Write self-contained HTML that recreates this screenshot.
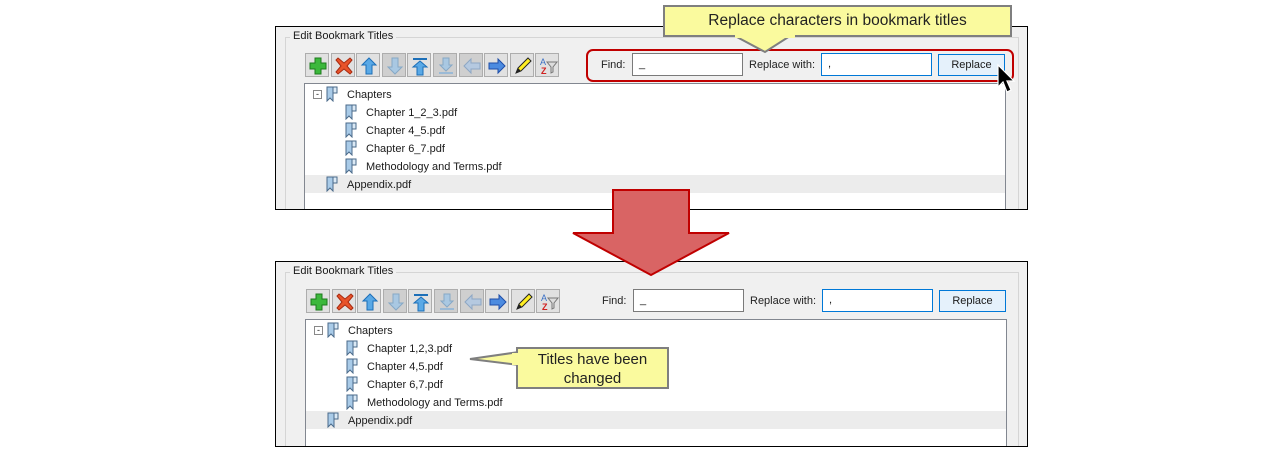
<!DOCTYPE html>
<html><head><style>
*{margin:0;padding:0;box-sizing:border-box}
body{width:1280px;height:454px;background:#fff;position:relative;overflow:hidden;font-family:"Liberation Sans",Arial,sans-serif;font-size:11px;color:#1a1a1a}
.abs{position:absolute}
.panel{position:absolute;left:275px;width:753px;border:1px solid #000;background:#f0f0f0;overflow:hidden}
.grp{position:absolute;left:9px;top:10px;width:734px;height:200px;border:1px solid #d5d5d5}
.grpl{position:absolute;left:14px;top:3px;background:#f0f0f0;padding:0 3px;font-size:11px}
.btn{position:absolute;top:26px;width:24px;height:24px;border:1px solid #adadad;background:#e1e1e1}
.btn.dis{background:#cfcfcf}
.btn svg{position:absolute;left:1px;top:1px}
.tree{position:absolute;left:28px;top:56px;width:702px;height:140px;border:1px solid #828790;background:#fff}
.row{position:absolute;height:18px;font-size:11px;line-height:18px}
.bm{position:absolute;width:12px;height:16px}
.inp{position:absolute;height:23px;border:1px solid #7a7a7a;background:#fff;font-size:11px;padding:4px 6px}
.lbl{position:absolute;font-size:11px;color:#222}
.rbtn{position:absolute;width:67px;height:22px;border:1px solid #0078d7;background:#e5f1fb;text-align:center;line-height:20px;font-size:11px}
.call{position:absolute;background:#fafa9e;border:2px solid #7f7f7f;text-align:center;color:#222}
</style></head><body>

<div class="panel" style="top:26px;height:184px">
 <div class="grp"></div><div class="grpl">Edit Bookmark Titles</div>
 <div class="tree" style="top:56px">
  <div class="abs" style="left:0;top:91px;width:700px;height:18px;background:#ececec"></div>
 </div>
</div>

<div class="panel" style="top:261px;height:186px">
 <div class="grp"></div><div class="grpl">Edit Bookmark Titles</div>
 <div class="tree" style="top:57px;left:29px">
  <div class="abs" style="left:0;top:91px;width:700px;height:18px;background:#ececec"></div>
 </div>
</div>

<div id="dyn"></div>

<div class="abs" style="left:586px;top:49px;width:428px;height:33px;border:2px solid #c00000;border-radius:7px"></div>

<svg class="abs" style="left:660px;top:0" width="360" height="60"><polygon points="75,36 105,52 130,36" fill="#fafa9e" stroke="#7f7f7f" stroke-width="2"/></svg>
<div class="call" style="left:663px;top:5px;width:349px;height:32px;line-height:28px;font-size:15.5px">Replace characters in bookmark titles</div>
<svg class="abs" style="left:735px;top:33px" width="60" height="6"><rect x="0" y="0" width="60" height="5" fill="#fafa9e"/></svg>

<svg class="abs" style="left:996px;top:63px" width="20" height="32"><polygon points="2,2 2,24 7,19 11,29 15,27 11,18 18,18" fill="#000" stroke="#fff" stroke-width="1.2"/></svg>

<svg class="abs" style="left:570px;top:188px" width="164" height="90"><polygon points="43,2 119,2 119,45 159,45 81,87 3,45 43,45" fill="#d96464" stroke="#c00000" stroke-width="2"/></svg>

<svg class="abs" style="left:465px;top:345px" width="60" height="30"><polygon points="5,14 54,7 54,20" fill="#fafa9e" stroke="#7f7f7f" stroke-width="2"/></svg>
<div class="call" style="left:516px;top:347px;width:153px;height:42px;line-height:19px;font-size:15px;padding-top:1px">Titles have been<br>changed</div>
<svg class="abs" style="left:512px;top:353px" width="8" height="12"><rect width="8" height="12" fill="#fafa9e"/></svg>

<script>
function icons(){
 const s=(c)=>'<svg width="22" height="22" viewBox="0 0 22 22">'+c+'</svg>';
 const up=(f,st)=>'<path d="M11 3 L18 10 H14 V19 H8 V10 H4 Z" fill="'+f+'" stroke="'+st+'"/>';
 const dn=(f,st)=>'<path d="M11 19 L18 12 H14 V3 H8 V12 H4 Z" fill="'+f+'" stroke="'+st+'"/>';
 return [
  [s('<path d="M8 3h6v5h5v6h-5v5H8v-5H3V8h5z" fill="#3cb83c" stroke="#1d7a1d"/>'),0],
  [s('<path d="M5 3l6 5 6-5 2 2-5 6 5 6-2 2-6-5-6 5-2-2 5-6-5-6z" fill="#e8532a" stroke="#a82a10"/>'),0],
  [s(up('#5aa9e6','#1c6fb8')),0],
  [s(dn('#a9c8e2','#86a8c6')),1],
  [s('<rect x="4" y="3" width="14" height="2" fill="#1c6fb8"/>'+'<path d="M11 6 L18 12 H14 V20 H8 V12 H4 Z" fill="#5aa9e6" stroke="#1c6fb8"/>'),0],
  [s('<rect x="4" y="17" width="14" height="2" fill="#9bbad6"/><path d="M11 16 L17 10 H14 V3 H8 V10 H5 Z" fill="#a9c8e2" stroke="#86a8c6"/>'),1],
  [s('<path d="M3 11 L10 4 V8 H19 V14 H10 V18 Z" fill="#b5c9e0" stroke="#8ea7c4"/>'),1],
  [s('<path d="M19 11 L12 4 V8 H3 V14 H12 V18 Z" fill="#4c8be0" stroke="#1f4ea8"/>'),0],
  [s('<path d="M4 18 L6 13 L16 3 L19 6 L9 16 Z" fill="#ffee22" stroke="#222"/><path d="M4 18l2-5 3 3z" fill="#222"/>'),0],
  [s('<text x="3" y="10" font-size="9" fill="#3a6fc4" font-family="Liberation Sans">A</text><text x="4" y="19" font-size="9" font-weight="bold" fill="#d02020" font-family="Liberation Sans">Z</text><path d="M10 7h10l-4 5v5l-2 1v-6z" fill="#ddd" stroke="#777"/>'),0]
 ];
}
const bm='<svg class="bm" viewBox="0 0 12 16"><path d="M1 1h6v14l-3-3-3 3z" fill="#a9cbe8" stroke="#4a6a8a"/><path d="M7 1h4v6H7z" fill="#dbe9f5" stroke="#4a6a8a"/></svg>';
let h='';
function panel(top,xoff,names){
 const ic=icons();
 ic.forEach((c,i)=>{h+='<div class="btn'+(c[1]?' dis':'')+'" style="left:'+(305+xoff+i*25.6)+'px;top:'+(top+27)+'px">'+c[0]+'</div>';});
 const tx=304+xoff, ty=top+57;
 h+='<div class="abs" style="left:'+(tx+9)+'px;top:'+(ty+7)+'px;width:9px;height:9px;border:1px solid #888;background:#fff;font-size:9px;line-height:6px;text-align:center">-</div>';
 h+='<div class="abs" style="left:'+(tx+22)+'px;top:'+(ty+3)+'px">'+bm+'</div><div class="row" style="left:'+(tx+43)+'px;top:'+(ty+3)+'px">Chapters</div>';
 names.forEach((n,i)=>{h+='<div class="abs" style="left:'+(tx+41)+'px;top:'+(ty+21+i*18)+'px">'+bm+'</div><div class="row" style="left:'+(tx+62)+'px;top:'+(ty+21+i*18)+'px">'+n+'</div>';});
 h+='<div class="abs" style="left:'+(tx+22)+'px;top:'+(ty+93)+'px">'+bm+'</div><div class="row" style="left:'+(tx+43)+'px;top:'+(ty+93)+'px">Appendix.pdf</div>';
 const y=top+27;
 h+='<div class="lbl" style="left:'+(601+xoff)+'px;top:'+(y+6)+'px">Find:</div>';
 h+='<div class="inp" style="left:'+(632+xoff)+'px;top:'+y+'px;width:111px">_</div>';
 h+='<div class="lbl" style="left:'+(749+xoff)+'px;top:'+(y+6)+'px">Replace with:</div>';
 h+='<div class="inp" style="left:'+(821+xoff)+'px;top:'+y+'px;width:111px;border-color:#0078d7">,</div>';
 h+='<div class="rbtn" style="left:'+(938+xoff)+'px;top:'+(y+1)+'px">Replace</div>';
}
panel(26,0,['Chapter 1_2_3.pdf','Chapter 4_5.pdf','Chapter 6_7.pdf','Methodology and Terms.pdf']);
panel(262,1,['Chapter 1,2,3.pdf','Chapter 4,5.pdf','Chapter 6,7.pdf','Methodology and Terms.pdf']);
document.getElementById('dyn').innerHTML=h;
</script>
</body></html>
